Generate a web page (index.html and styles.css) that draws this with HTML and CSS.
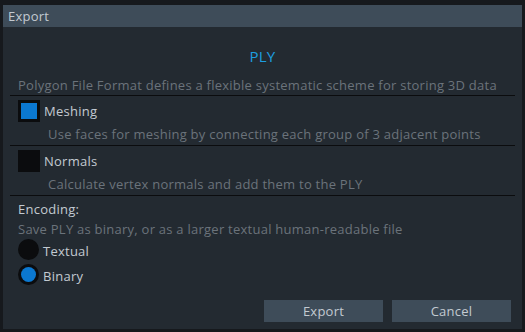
FILE: index.html
```html
<!DOCTYPE html>
<html lang="en">
<head>
    <meta charset="UTF-8">
    <title>Export</title>
    <link rel="stylesheet" href="styles.css">
</head>
<body>
    <div class="dialog">
        <div class="title-bar">Export</div>
        <div class="dialog-body">
            <h2 class="format-name">PLY</h2>
            <div class="format-desc">Polygon File Format defines a flexible systematic scheme for storing 3D data</div>

            <div class="option">
                <label class="check-row">
                    <span class="checkbox checked"></span>
                    <span>Meshing</span>
                </label>
                <div class="hint">Use faces for meshing by connecting each group of 3 adjacent points</div>
            </div>

            <div class="option">
                <label class="check-row">
                    <span class="checkbox"></span>
                    <span>Normals</span>
                </label>
                <div class="hint">Calculate vertex normals and add them to the PLY</div>
            </div>

            <div class="encoding">
                <div class="label">Encoding:</div>
                <div class="enc-hint">Save PLY as binary, or as a larger textual human-readable file</div>
                <label class="radio-row">
                    <span class="radio"></span>
                    <span class="radio-text">Textual</span>
                </label>
                <label class="radio-row">
                    <span class="radio checked"></span>
                    <span class="radio-text">Binary</span>
                </label>
            </div>

            <div class="buttons">
                <button class="btn">Export</button>
                <button class="btn">Cancel</button>
            </div>
        </div>
    </div>
</body>
</html>
```

FILE: styles.css
```css
body {
    margin: 0;
    background-color: #16191d;
    font-family: "Open Sans", sans-serif;
    font-size: 13px;
    letter-spacing: 0.25px;
    color: #c3cad1;
}

.dialog {
    margin: 5px 3px 0 3px;
    width: 519px;
    height: 324px;
    background-color: #232a31;
    display: flex;
    flex-direction: column;
}

.title-bar {
    height: 22px;
    line-height: 22px;
    padding-left: 5px;
    background-color: #3e4c59;
    color: #c3cad1;
}

.dialog-body {
    flex: 1;
    padding: 0 7px 7px 7px;
    display: flex;
    flex-direction: column;
}

.format-name {
    margin: 0;
    padding-top: 19px;
    height: 30px;
    text-align: center;
    font-size: 15px;
    font-weight: normal;
    color: #1d9ee0;
}

.format-desc {
    color: #6b737b;
    line-height: 18px;
    padding: 0 0 1px 8px;
    border-bottom: 1px solid #0b0c0e;
}

.option {
    border-bottom: 1px solid #0b0c0e;
    padding: 4px 0 2px 8px;
}

.check-row,
.radio-row {
    display: flex;
    align-items: center;
    gap: 4px;
}

.checkbox {
    width: 22px;
    height: 22px;
    background-color: #0b0c0e;
    display: flex;
    align-items: center;
    justify-content: center;
}

.checkbox.checked::after {
    content: "";
    width: 16px;
    height: 16px;
    background-color: #0b78d0;
}

.hint {
    color: #6b737b;
    line-height: 18px;
    padding: 3px 0 0 30px;
}

.encoding {
    padding: 4px 0 0 8px;
    line-height: 18px;
}

.enc-hint {
    color: #6b737b;
    margin: 2px 0 1px 0;
}

.radio-row + .radio-row {
    margin-top: 4px;
}

.radio-text {
    padding-top: 3px;
}

.radio {
    width: 21px;
    height: 21px;
    border-radius: 50%;
    background-color: #0b0c0e;
    display: flex;
    align-items: center;
    justify-content: center;
}

.radio.checked::after {
    content: "";
    width: 15px;
    height: 15px;
    border-radius: 50%;
    background-color: #0b78d0;
}

.buttons {
    margin-top: auto;
    display: flex;
    justify-content: flex-end;
    gap: 9px;
    padding-right: 4px;
}

.btn {
    width: 119px;
    height: 22px;
    border: none;
    background-color: #3e4c59;
    color: #c3cad1;
    font-family: "Open Sans", sans-serif;
    font-size: 13px;
    letter-spacing: 0.25px;
}
```
